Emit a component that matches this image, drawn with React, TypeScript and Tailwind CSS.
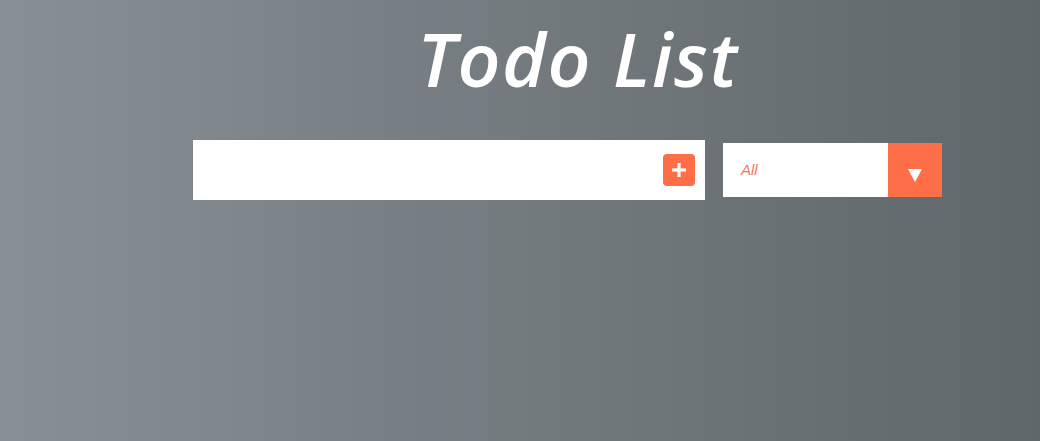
import { Plus } from 'lucide-react';

const App = () => {
  return (
    <div
      className="min-h-[441px] w-full bg-gradient-to-r from-[#888f96] to-[#606769] text-white"
      style={{ fontFamily: '"Open Sans", "Liberation Sans", sans-serif' }}
    >
      {/* Header */}
      <header className="flex justify-center pl-[116px] pt-[12px]">
        <h1 className="text-[75px] leading-[92px] font-semibold italic tracking-[1.5px] text-white">
          Todo List
        </h1>
      </header>

      {/* Form */}
      <form className="flex items-center justify-center pl-[95px] pt-[36px] gap-[18px]">
        <div className="flex items-center w-[512px] h-[60px] bg-white pr-[10px]">
          <input type="text" className="flex-1 h-full px-2 text-3xl text-gray-800 outline-none bg-transparent" />
          <button
            type="button"
            className="w-8 h-8 rounded-[4px] bg-[#ff6f47] flex items-center justify-center"
          >
            <Plus className="w-6 h-6 text-white" strokeWidth={3.2} strokeLinecap="butt" />
          </button>
        </div>

        <div className="flex w-[219px] h-[54px] bg-white">
          <div
            className="flex-1 flex items-center pl-[18px] text-[15px] italic text-[#f47a5a]"
            style={{ fontFamily: '"Liberation Sans", Arial, sans-serif' }}
          >
            All
          </div>
          <div className="w-[54px] h-full bg-[#ff6f47] flex items-center justify-center pt-[10px]">
            <svg width="14" height="13" viewBox="0 0 14 13">
              <path d="M0 0 H14 L7 13 Z" fill="white" />
            </svg>
          </div>
        </div>
      </form>
    </div>
  );
};

export default App;
